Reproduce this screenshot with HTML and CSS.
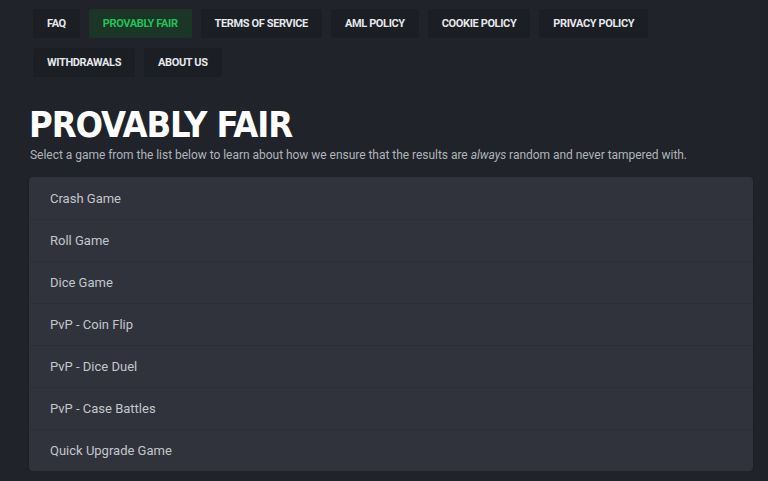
FILE: index.html
```html
<!DOCTYPE html>
<html>
<head>
<meta charset="utf-8">
<link rel="stylesheet" href="styles.css">
</head>
<body>
<div class="page">
  <nav class="tabs">
    <a class="tab">FAQ</a>
    <a class="tab active">PROVABLY FAIR</a>
    <a class="tab">TERMS OF SERVICE</a>
    <a class="tab">AML POLICY</a>
    <a class="tab">COOKIE POLICY</a>
    <a class="tab">PRIVACY POLICY</a>
    <a class="tab">WITHDRAWALS</a>
    <a class="tab">ABOUT US</a>
  </nav>
  <h1 class="title">PROVABLY FAIR</h1>
  <p class="subtitle">Select a game from the list below to learn about how we ensure that the results are <em>always</em> random and never tampered with.</p>
  <ul class="games">
    <li class="game">Crash Game</li>
    <li class="game">Roll Game</li>
    <li class="game">Dice Game</li>
    <li class="game">PvP - Coin Flip</li>
    <li class="game">PvP - Dice Duel</li>
    <li class="game">PvP - Case Battles</li>
    <li class="game">Quick Upgrade Game</li>
  </ul>
</div>
</body>
</html>
```
FILE: styles.css
```css
html, body {
  margin: 0;
  padding: 0;
  background: #202329;
  font-family: Roboto, "Liberation Sans", sans-serif;
}
.page {
  padding: 9px 15px 0 29px;
}
.tabs {
  display: flex;
  flex-wrap: wrap;
  gap: 10px 9px;
  margin-left: 4px;
  width: 640px;
}
.tab {
  display: flex;
  align-items: center;
  height: 29px;
  padding: 0 14px;
  background: #1b1e23;
  border-radius: 2px;
  color: #e6e8ec;
  font-size: 11px;
  font-weight: 700;
  letter-spacing: -0.37px;
}
.tab.active {
  background: #1b3527;
  color: #1fc35a;
}
.title {
  margin: 28px 0 0 0;
  font-family: "DejaVu Sans Condensed", "DejaVu Sans", sans-serif;
  font-weight: 700;
  font-size: 36px;
  line-height: 40px;
  color: #ffffff;
  letter-spacing: -1.1px;
}
.subtitle {
  margin: 2px 0 0 1px;
  font-size: 12px;
  line-height: 16px;
  color: #b0b4bb;
  letter-spacing: -0.03px;
}
.subtitle em {
  font-style: italic;
}
.games {
  list-style: none;
  margin: 14px 0 0 0;
  padding: 0;
  background: #30333b;
  border-radius: 4px;
  box-shadow: 0 1px 2px rgba(0,0,0,0.25);
}
.game {
  height: 42px;
  display: flex;
  align-items: center;
  padding-left: 21px;
  font-size: 13px;
  color: #c3c6cc;
  border-top: 1px solid #2c2f36;
  box-sizing: border-box;
}
.game:first-child {
  border-top: none;
}
```
